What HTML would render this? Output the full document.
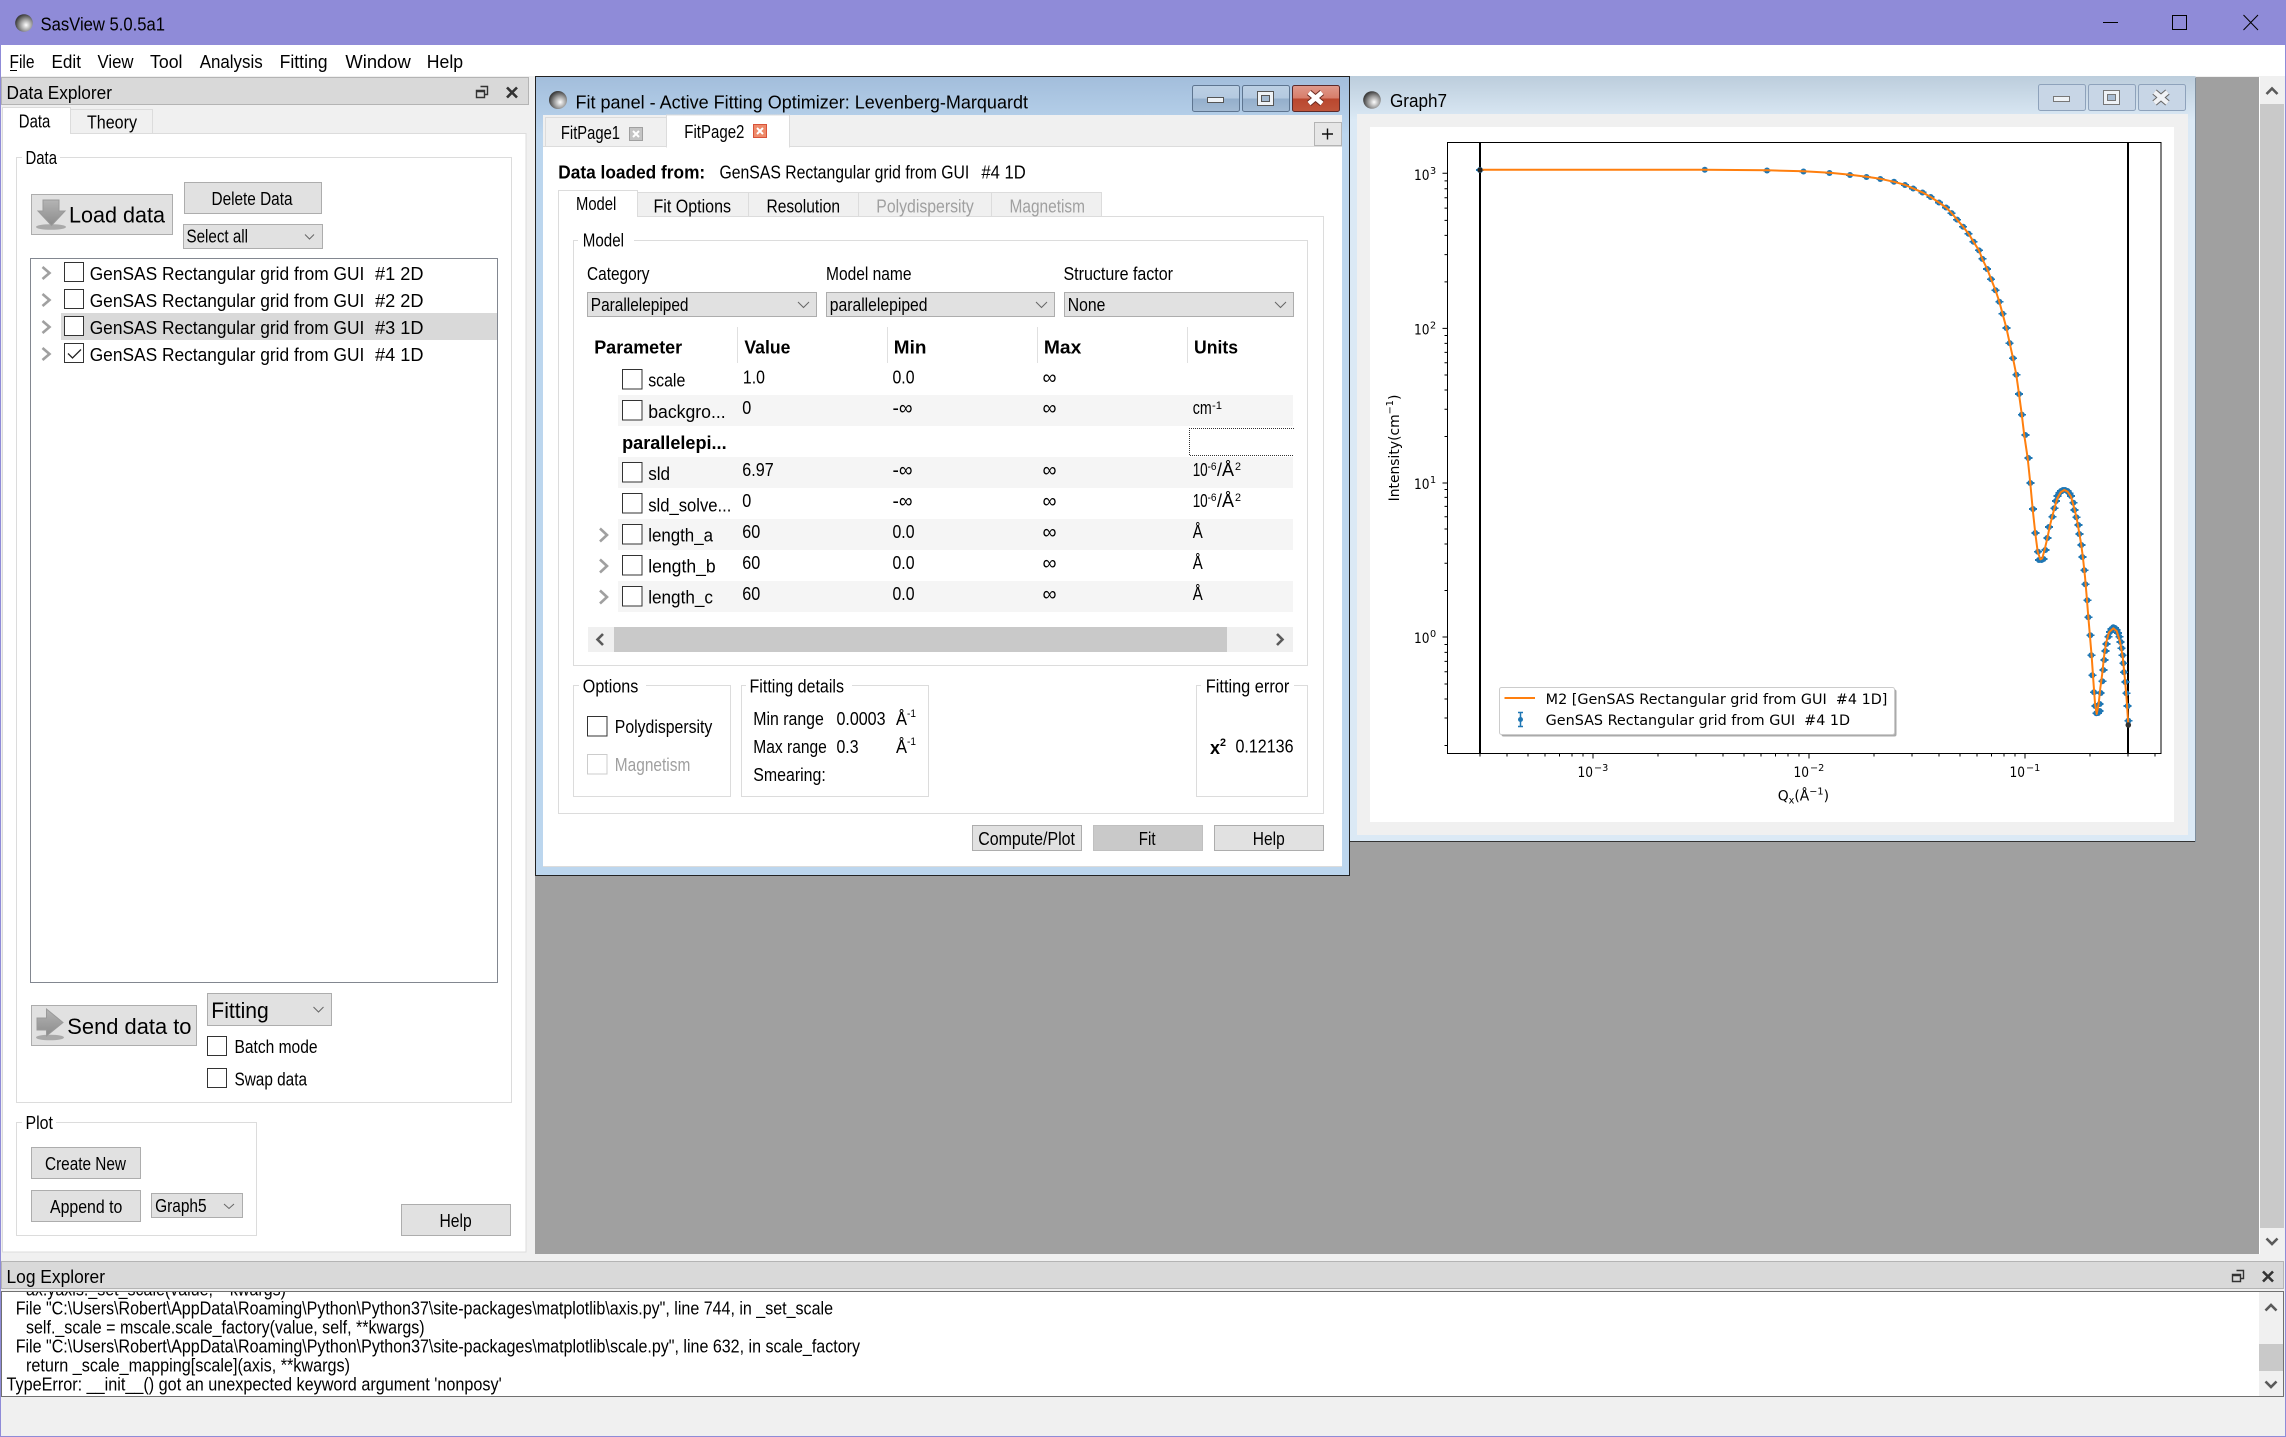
<!DOCTYPE html>
<html lang="en"><head><meta charset="utf-8"><title>SasView 5.0.5a1</title>
<style>
html,body{margin:0;padding:0;background:#f0f0f0}
svg{display:block}
text{font-family:"Liberation Sans",sans-serif;font-size:18px;fill:#000;white-space:pre}
.b{font-weight:bold}
.g{fill:#a0a0a0}
.s{font-size:11px}
.i{font-size:20px}
.d{font-family:"DejaVu Sans",sans-serif;font-size:13.9px}
.ds{font-family:"DejaVu Sans",sans-serif;font-size:9.7px}
rect{shape-rendering:crispEdges}
.r{shape-rendering:auto}
.btn{fill:#e1e1e1;stroke:#adadad}
.cb{fill:#fff;stroke:#333}
.gb{fill:none;stroke:#dcdcdc}
.cv{fill:none;stroke:#a0a0a0;stroke-width:2.6}
.dk{fill:none;stroke:#5a5a5a;stroke-width:2.6}
.cc{fill:none;stroke:#666;stroke-width:1}
</style></head><body>
<svg xmlns="http://www.w3.org/2000/svg" width="2286" height="1437" viewBox="0 0 2286 1437">
<defs>
<radialGradient id="sph" cx=".62" cy=".62" r=".62"><stop offset="0" stop-color="#fff"/><stop offset=".55" stop-color="#999"/><stop offset="1" stop-color="#3c3c3c"/></radialGradient>
<linearGradient id="fp" gradientUnits="userSpaceOnUse" x1="0" y1="76" x2="0" y2="135"><stop offset="0" stop-color="#a2bddb"/><stop offset="1" stop-color="#bcd6ee"/></linearGradient>
<linearGradient id="gp" gradientUnits="userSpaceOnUse" x1="0" y1="76" x2="0" y2="120"><stop offset="0" stop-color="#bccddc"/><stop offset="1" stop-color="#dbe9f5"/></linearGradient>
<linearGradient id="ar" x1="0" y1="0" x2="0" y2="1"><stop offset="0" stop-color="#b4b4b4"/><stop offset="1" stop-color="#8c8c8c"/></linearGradient>
<linearGradient id="ab" x1="0" y1="0" x2="0" y2="1"><stop offset="0" stop-color="#bcd0e4"/><stop offset=".5" stop-color="#b4c9e0"/><stop offset=".5" stop-color="#93aecb"/><stop offset="1" stop-color="#a3bbd4"/></linearGradient>
<linearGradient id="ac" x1="0" y1="0" x2="0" y2="1"><stop offset="0" stop-color="#e09a8c"/><stop offset=".5" stop-color="#d77c69"/><stop offset=".5" stop-color="#b9462e"/><stop offset="1" stop-color="#c0553b"/></linearGradient>
<marker id="dot" markerUnits="userSpaceOnUse" markerWidth="10" markerHeight="10" refX="5" refY="5"><circle cx="5" cy="5" r="3" fill="#1f77b4"/><rect x="1" y="4.2" width="8" height="1.6" fill="#1f77b4"/></marker>
<clipPath id="lg"><rect x="2" y="1292" width="2250" height="104"/></clipPath>
</defs>

<!-- main window -->
<rect width="2286" height="1437" fill="#f0f0f0"/>
<rect width="2286" height="45" fill="#8f8bd8"/>
<rect y="45" width="2286" height="31" fill="#fff"/>
<rect x=".5" y=".5" width="2285" height="1436" fill="none" stroke="#8f8bd8"/>
<circle cx="24" cy="23" r="8.8" fill="url(#sph)"/>
<text x="40.5" y="30.5" textLength="124.5" lengthAdjust="spacingAndGlyphs">SasView 5.0.5a1</text>
<path d="M2103 22.5h15" stroke="#000" fill="none"/><rect x="2172.5" y="15.5" width="14" height="14" fill="none" stroke="#000"/><path d="M2243.5 15l14.5 15M2258 15l-14.5 15" stroke="#000" fill="none"/>
<text x="9.500" y="68" textLength="25" lengthAdjust="spacingAndGlyphs">File</text><rect x="10" y="70" width="7" height="1" fill="#000"/>
<text x="51.500" y="68" textLength="29.500" lengthAdjust="spacingAndGlyphs">Edit</text>
<text x="97.500" y="68" textLength="36" lengthAdjust="spacingAndGlyphs">View</text>
<text x="150" y="68" textLength="32.500" lengthAdjust="spacingAndGlyphs">Tool</text>
<text x="199.700" y="68" textLength="63" lengthAdjust="spacingAndGlyphs">Analysis</text>
<text x="279.600" y="68" textLength="48" lengthAdjust="spacingAndGlyphs">Fitting</text>
<text x="345.400" y="68" textLength="65.400" lengthAdjust="spacingAndGlyphs">Window</text>
<text x="426.800" y="68" textLength="36.300" lengthAdjust="spacingAndGlyphs">Help</text>

<!-- MDI -->
<rect x="535" y="77" width="1724" height="1177" fill="#a0a0a0"/>
<rect x="2259" y="77" width="1" height="1177" fill="#fff"/>
<rect x="2260" y="104" width="24" height="1124" fill="#c9c9c9"/>
<path class="dk" d="M2266.500 94l5.500-5.500 5.500 5.500M2266.500 1238.500l5.500 5.500 5.500-5.500"/>

<!-- data explorer -->
<rect x="1.500" y="77.500" width="527" height="27" fill="#d9d9d9" stroke="#b4b4b4"/>
<text x="6.500" y="99" textLength="105.500" lengthAdjust="spacingAndGlyphs">Data Explorer</text>
<path d="M480.500 86.500h7v8h-3M476.500 90.500h8v7h-8zM476.500 91.500h8" fill="none" stroke="#333" stroke-width="1.400"/>
<path d="M507 87.500l10 10M517 87.500l-10 10" stroke="#333" stroke-width="2.600" fill="none"/>
<rect x="2.500" y="133.500" width="523.500" height="1118.500" fill="#fff" stroke="#dcdcdc"/>
<rect x="70.500" y="109.500" width="82" height="24" fill="#f0f0f0" stroke="#dcdcdc"/>
<rect x="2.500" y="107.500" width="68" height="26" fill="#fff" stroke="#dcdcdc"/><rect x="3" y="130" width="67" height="5" fill="#fff"/>
<text x="18.800" y="127.300" textLength="31.500" lengthAdjust="spacingAndGlyphs">Data</text>
<text x="87" y="128.700" textLength="50" lengthAdjust="spacingAndGlyphs">Theory</text>
<rect x="16.500" y="157.500" width="495" height="945" class="gb"/><rect x="22" y="150" width="38" height="14" fill="#fff"/>
<text x="25.500" y="164" textLength="31.500" lengthAdjust="spacingAndGlyphs">Data</text>

<rect x="31.500" y="194.500" width="141" height="40" class="btn"/>
<ellipse cx="51" cy="227" rx="15" ry="2.800" fill="#a9a9a9" class="r"/>
<path d="M43 200h16v11h6l-13.500 14.500L38 211h5z" fill="url(#ar)" stroke="#9a9a9a" class="r"/>
<text x="69" y="222.700" style="font-size:22px" textLength="96" lengthAdjust="spacingAndGlyphs">Load data</text>
<rect x="184.500" y="182.500" width="137" height="31" class="btn"/>
<text x="211.500" y="205" textLength="81" lengthAdjust="spacingAndGlyphs">Delete Data</text>
<rect x="183.500" y="224.500" width="139" height="24" class="btn"/>
<text x="186.500" y="242.700" textLength="61.500" lengthAdjust="spacingAndGlyphs">Select all</text>
<path class="cc" d="M305 234.500l4.500 4.500 4.500-4.500"/>

<rect x="30.500" y="258.500" width="467" height="724" fill="#fff" stroke="#828790"/>
<rect x="61" y="313" width="436" height="27" fill="#d9d9d9"/>
<path class="cv" d="M42.500 267l7 6-7 6M42.500 294l7 6-7 6M42.500 321l7 6-7 6M42.500 348l7 6-7 6"/>
<rect x="64.500" y="262.500" width="19" height="19" class="cb"/>
<rect x="64.500" y="289.500" width="19" height="19" class="cb"/>
<rect x="64.500" y="316.500" width="19" height="19" class="cb"/>
<rect x="64.500" y="343.500" width="19" height="19" class="cb"/>
<path d="M68 353.500l4.500 4.500L81 349.500" fill="none" stroke="#222" stroke-width="1.300"/>
<text x="89.700" y="280" textLength="274.600" lengthAdjust="spacingAndGlyphs">GenSAS Rectangular grid from GUI</text><text x="375" y="280" textLength="48.500" lengthAdjust="spacingAndGlyphs">#1 2D</text>
<text x="89.700" y="307" textLength="274.600" lengthAdjust="spacingAndGlyphs">GenSAS Rectangular grid from GUI</text><text x="375" y="307" textLength="48.500" lengthAdjust="spacingAndGlyphs">#2 2D</text>
<text x="89.700" y="334" textLength="274.600" lengthAdjust="spacingAndGlyphs">GenSAS Rectangular grid from GUI</text><text x="375" y="334" textLength="48.500" lengthAdjust="spacingAndGlyphs">#3 1D</text>
<text x="89.700" y="361" textLength="274.600" lengthAdjust="spacingAndGlyphs">GenSAS Rectangular grid from GUI</text><text x="375" y="361" textLength="48.500" lengthAdjust="spacingAndGlyphs">#4 1D</text>

<rect x="31.500" y="1005.500" width="165" height="40" class="btn"/>
<ellipse cx="50" cy="1037.500" rx="14" ry="2.800" fill="#a9a9a9" class="r"/>
<path d="M37 1018h9.500v-9L63 1022.500 46.500 1036v-6H37z" fill="url(#ar)" stroke="#9a9a9a" class="r"/>
<text x="67.300" y="1034" style="font-size:22px" textLength="124.200" lengthAdjust="spacingAndGlyphs">Send data to</text>
<rect x="207.500" y="993.500" width="124" height="32" class="btn"/>
<text x="211.300" y="1018" style="font-size:22px" textLength="57.500" lengthAdjust="spacingAndGlyphs">Fitting</text>
<path class="cc" d="M313.500 1007l5 5 5-5"/>
<rect x="207.500" y="1036.500" width="19" height="19" class="cb"/>
<text x="234.500" y="1053" textLength="83" lengthAdjust="spacingAndGlyphs">Batch mode</text>
<rect x="207.500" y="1068.500" width="19" height="19" class="cb"/>
<text x="234.500" y="1085.300" textLength="72.500" lengthAdjust="spacingAndGlyphs">Swap data</text>

<rect x="16.500" y="1122.500" width="240" height="113" class="gb"/><rect x="22" y="1116" width="34" height="14" fill="#fff"/>
<text x="25.500" y="1129" textLength="27.500" lengthAdjust="spacingAndGlyphs">Plot</text>
<rect x="31.500" y="1147.500" width="109" height="31" class="btn"/>
<text x="45" y="1170" textLength="81" lengthAdjust="spacingAndGlyphs">Create New</text>
<rect x="31.500" y="1190.500" width="109" height="31" class="btn"/>
<text x="50" y="1213" textLength="72.300" lengthAdjust="spacingAndGlyphs">Append to</text>
<rect x="151.500" y="1193.500" width="91" height="24" class="btn"/>
<text x="155.100" y="1212" textLength="51.500" lengthAdjust="spacingAndGlyphs">Graph5</text>
<path class="cc" d="M224 1204l5 4.500 5-4.500"/>
<rect x="401.500" y="1204.500" width="109" height="31" class="btn"/>
<text x="439.500" y="1227" textLength="32.200" lengthAdjust="spacingAndGlyphs">Help</text>

<!-- log explorer -->
<rect x="1.500" y="1261.500" width="2282" height="27" fill="#d9d9d9" stroke="#b4b4b4"/>
<text x="6.500" y="1283" textLength="98.500" lengthAdjust="spacingAndGlyphs">Log Explorer</text>
<path d="M2236.500 1270.500h7v8h-3M2232.500 1274.500h8v7h-8zM2232.500 1275.500h8" fill="none" stroke="#333" stroke-width="1.400"/>
<path d="M2263 1271.500l10 10M2273 1271.500l-10 10" stroke="#333" stroke-width="2.600" fill="none"/>
<rect x="1.500" y="1291.500" width="2282" height="105" fill="#fff" stroke="#707070"/>
<g clip-path="url(#lg)">
<text x="26" y="1295.300" textLength="260" lengthAdjust="spacingAndGlyphs">ax.yaxis._set_scale(value, **kwargs)</text>
<text x="15.700" y="1314.300" textLength="817.300" lengthAdjust="spacingAndGlyphs">File "C:\Users\Robert\AppData\Roaming\Python\Python37\site-packages\matplotlib\axis.py", line 744, in _set_scale</text>
<text x="26" y="1333.300" textLength="398.600" lengthAdjust="spacingAndGlyphs">self._scale = mscale.scale_factory(value, self, **kwargs)</text>
<text x="15.700" y="1352.300" textLength="844.300" lengthAdjust="spacingAndGlyphs">File "C:\Users\Robert\AppData\Roaming\Python\Python37\site-packages\matplotlib\scale.py", line 632, in scale_factory</text>
<text x="26" y="1371.300" textLength="324" lengthAdjust="spacingAndGlyphs">return _scale_mapping[scale](axis, **kwargs)</text>
<text x="6.500" y="1390.300" textLength="495.200" lengthAdjust="spacingAndGlyphs">TypeError: __init__() got an unexpected keyword argument 'nonposy'</text>
</g>
<rect x="2259" y="1292" width="24" height="104" fill="#f0f0f0"/>
<rect x="2259" y="1344" width="24" height="27" fill="#c9c9c9"/>
<path class="dk" d="M2265.500 1310.500l5.500-5.500 5.500 5.500M2265.500 1381.500l5.500 5.500 5.500-5.500"/>

<!-- graph window -->
<rect x="1350" y="76" width="845.500" height="766" fill="url(#gp)"/>
<path d="M1350 841.500h845.500" stroke="#333" fill="none"/>
<path d="M2195.500 78v764" stroke="#7f8f9e" fill="none"/>
<rect x="1357" y="114" width="831" height="721" fill="#f0f0f0"/>
<rect x="1370" y="127" width="804" height="695" fill="#fff"/>
<circle cx="1372" cy="100" r="8.800" fill="url(#sph)"/>
<text x="1390" y="106.800" textLength="57" lengthAdjust="spacingAndGlyphs">Graph7</text>
<rect x="2038.500" y="84.500" width="47" height="26" rx="2" fill="#c8d6e6" stroke="#8ea2bb" class="r"/>
<rect x="2088.500" y="84.500" width="47" height="26" rx="2" fill="#c8d6e6" stroke="#8ea2bb" class="r"/>
<rect x="2138.500" y="84.500" width="47" height="26" rx="2" fill="#c8d6e6" stroke="#8ea2bb" class="r"/>
<rect x="2053.500" y="96.500" width="16" height="5" fill="#eef2f6" stroke="#777" class="r"/>
<rect x="2103.500" y="90.500" width="16" height="14" fill="#eef2f6" stroke="#777" class="r"/><rect x="2107.500" y="94.500" width="8" height="6" fill="#a9bdd3" stroke="#777" class="r"/>
<path d="M2154.500 92l13 11M2167.500 92l-13 11" stroke="#666" stroke-width="6.500" fill="none"/><path d="M2154.500 92l13 11M2167.500 92l-13 11" stroke="#f0f2f5" stroke-width="4.500" fill="none"/>

<!-- plot -->
<rect x="1447.500" y="142.500" width="713.500" height="611" fill="#fff" stroke="#000"/>
<path d="M1480 143v610M2128 143v610" stroke="#000" stroke-width="2" fill="none"/>
<path d="M1447.500 173.300h-5M1447.500 328.400h-5M1447.500 483h-5M1447.500 637h-5M1593 753.500v5M1809 753.500v5M2025 753.500v5" stroke="#000" fill="none"/>
<path d="M1447.500 180.900h-3M1447.500 188.800h-3M1447.500 197.800h-3M1447.500 208.100h-3M1447.500 220.400h-3M1447.500 235.400h-3M1447.500 254.600h-3M1447.500 281.900h-3M1447.500 335.500h-3M1447.500 343.400h-3M1447.500 352.400h-3M1447.500 362.700h-3M1447.500 375h-3M1447.500 390h-3M1447.500 409.200h-3M1447.500 436.500h-3M1447.500 489.500h-3M1447.500 497.400h-3M1447.500 506.400h-3M1447.500 516.700h-3M1447.500 529h-3M1447.500 544h-3M1447.500 563.200h-3M1447.500 590.500h-3M1447.500 644.500h-3M1447.500 652.400h-3M1447.500 661.400h-3M1447.500 671.700h-3M1447.500 684h-3M1447.500 699h-3M1447.500 718h-3M1447.500 745.500h-3M1480 753.500v3M1507 753.500v3M1528 753.500v3M1545 753.500v3M1559.500 753.500v3M1572 753.500v3M1583 753.500v3M1658 753.500v3M1696 753.500v3M1723 753.500v3M1744 753.500v3M1761 753.500v3M1775.500 753.500v3M1788 753.500v3M1799 753.500v3M1874 753.500v3M1912 753.500v3M1939 753.500v3M1960 753.500v3M1977 753.500v3M1991.500 753.500v3M2004 753.500v3M2015 753.500v3M2090 753.500v3M2128 753.500v3M2155 753.500v3" stroke="#000" fill="none"/>

<polyline fill="none" stroke="none" marker-start="url(#dot)" marker-mid="url(#dot)" marker-end="url(#dot)" points="1480,170 1704.8,169.800 1767,170.500 1803.500,171.500 1829.500,173 1850,175 1866.500,177 1880.300,179 1894,181.800 1905,185 1913.200,188.500 1922.500,192.500 1930.700,197 1939,202.500 1946.100,207.500 1951.600,213.100 1957.100,219.600 1963.100,226.700 1968.600,233.700 1973.500,241.800 1979,250.400 1982.300,258.900 1987.200,269 1991.100,279.100 1995.500,290.200 1999.300,301.700 2002.600,313.800 2006.400,328 2009.700,343.100 2013,358.200 2016.300,374.800 2019,394 2021.800,414.600 2025.300,435 2028.300,458 2030.300,483 2033,509 2035.300,533 2038,551.700 2039,560 2041.500,560 2043.500,559 2045.300,550 2047.300,538 2049,527 2052.300,516.700 2054.300,508.300 2056,501 2057.500,496 2059.300,493 2061,491 2063,490 2065,490 2067.500,491 2069.300,493.300 2071,496 2073.300,502.700 2074.300,510 2076.300,517.300 2078.300,525 2079.300,534 2081.300,545 2082.300,557 2084.300,570.300 2085.300,584.300 2087.300,600.300 2088.300,617.300 2090.300,635.300 2091.300,655.300 2092.300,675.300 2094,692.300 2095.300,706 2096.300,713.300 2098,713 2099.700,711 2099.700,704 2100.700,693 2102.300,681.300 2103.300,670 2104.300,660 2105.300,651 2106.300,644 2108.300,636.700 2110,632 2111.500,629 2113.300,627.300 2115,628 2116.700,630 2118,633 2119.300,636.700 2120.700,642 2121.700,648.300 2122.700,655.300 2123.300,663.300 2124,672.300 2125.300,682 2126.300,693.300 2127.700,706 2128.300,720.700"/>
<polyline fill="none" stroke="#ff7f0e" stroke-width="2" stroke-linejoin="round" points="1480,169.800 1704.800,169.800 1767.800,170.300 1803.500,171.300 1829.800,172.800 1850.100,174.800 1866.600,176.800 1880.300,178.800 1894,181.800 1905,184.900 1913.200,188.400 1922.500,192.400 1930.700,197 1939,202.500 1946.100,207.500 1951.600,213.100 1957.100,219.600 1963.100,226.700 1968.600,233.700 1973.500,241.800 1979,250.400 1982.300,258.900 1987.200,269 1991.100,279.100 1995.500,290.200 1999.300,301.700 2002.600,313.800 2006.400,328 2009.700,343.100 2013,358.200 2016.300,374.800 2019,394 2021.800,414.600 2024,433.300 2027.700,458.300 2030.300,483.300 2032.700,509.300 2035.300,533.300 2037.700,551.700 2040.300,559.300 2042.300,558.300 2044.700,549.300 2047.300,538.300 2049.700,526.700 2052.300,516 2054.700,507.300 2057.300,498.300 2060.700,492.300 2064.300,490 2067.700,491.700 2071,496.700 2074.300,508.300 2077,520 2079.300,533.300 2081.300,545 2083,558.300 2085,576.700 2086.700,596.700 2088.300,616.700 2090,636.700 2091.700,656.700 2093.300,680 2095,703.300 2096.700,714 2098.700,703.300 2100.300,688.300 2102.300,673.300 2104,656.700 2106,643.300 2109,632.300 2113.300,628.300 2116.700,631 2120,641.700 2122.700,656.700 2125,680 2126.700,700 2128.300,725"/>
<circle cx="1480" cy="170" r="2.600" fill="#222"/><circle cx="2128.300" cy="725" r="2.800" fill="#333"/>

<rect x="1501.500" y="689.500" width="395" height="47" rx="2" fill="#aaa" class="r"/>
<rect x="1499.500" y="687.500" width="395" height="47" rx="2" fill="#fff" stroke="#ccc" class="r"/>
<path d="M1504.500 698h30.500" stroke="#ff7f0e" stroke-width="2" fill="none"/>
<path d="M1520.500 712v15M1518 712.500h5M1518 726.500h5" stroke="#1f77b4" stroke-width="1.500" fill="none"/><circle cx="1520.500" cy="719.500" r="2.500" fill="#1f77b4"/>
<text class="d" x="1545.700" y="703.800" textLength="341.700" lengthAdjust="spacingAndGlyphs">M2 [GenSAS Rectangular grid from GUI  #4 1D]</text>
<text class="d" x="1545.700" y="725" textLength="304.400" lengthAdjust="spacingAndGlyphs">GenSAS Rectangular grid from GUI  #4 1D</text>

<text class="d" x="1414" y="179.800" textLength="15.500" lengthAdjust="spacingAndGlyphs">10</text><text class="ds" x="1430" y="174">3</text>
<text class="d" x="1414" y="334.500" textLength="15.500" lengthAdjust="spacingAndGlyphs">10</text><text class="ds" x="1430" y="328.700">2</text>
<text class="d" x="1414" y="489" textLength="15.500" lengthAdjust="spacingAndGlyphs">10</text><text class="ds" x="1430" y="483.200">1</text>
<text class="d" x="1414" y="643" textLength="15.500" lengthAdjust="spacingAndGlyphs">10</text><text class="ds" x="1430" y="637.200">0</text>
<text class="d" x="1577.500" y="776.800" textLength="15.500" lengthAdjust="spacingAndGlyphs">10</text><text class="ds" x="1594" y="771">−3</text>
<text class="d" x="1793.500" y="776.800" textLength="15.500" lengthAdjust="spacingAndGlyphs">10</text><text class="ds" x="1810" y="771">−2</text>
<text class="d" x="2009.500" y="776.800" textLength="15.500" lengthAdjust="spacingAndGlyphs">10</text><text class="ds" x="2026" y="771">−1</text>
<text class="d" x="1777.700" y="800.500">Q<tspan class="ds" dy="3">x</tspan><tspan dy="-3">(Å</tspan><tspan class="ds" dy="-6">−1</tspan><tspan dy="6">)</tspan></text>
<text class="d" transform="rotate(-90 1399 448)" x="1399" y="448" text-anchor="middle">Intensity(cm<tspan class="ds" dy="-6">−1</tspan><tspan dy="6">)</tspan></text>

<!-- fit panel window -->
<rect x="535.500" y="76.500" width="814" height="799" fill="url(#fp)" stroke="#222"/>
<rect x="543" y="115" width="799" height="752" fill="#fff"/>
<path d="M543 866.500h799" stroke="#dcdcdc" fill="none"/>
<rect x="543" y="115" width="799" height="31" fill="#f0f0f0"/>
<path d="M543 146.500h799" stroke="#dcdcdc" fill="none"/>
<circle cx="558" cy="100" r="9" fill="url(#sph)"/>
<text x="575.500" y="108.300" textLength="452.500" lengthAdjust="spacingAndGlyphs">Fit panel - Active Fitting Optimizer: Levenberg-Marquardt</text>
<rect x="1192.500" y="85.500" width="47" height="26" rx="2" fill="url(#ab)" stroke="#5e7590" class="r"/>
<rect x="1242.500" y="85.500" width="47" height="26" rx="2" fill="url(#ab)" stroke="#5e7590" class="r"/>
<rect x="1292.500" y="85.500" width="47" height="26" rx="2" fill="url(#ac)" stroke="#5c2a2a" class="r"/>
<rect x="1207.500" y="97.500" width="16" height="5" fill="#eef2f6" stroke="#555" class="r"/>
<rect x="1257.500" y="91.500" width="16" height="14" fill="#eef2f6" stroke="#555" class="r"/><rect x="1261.500" y="95.500" width="8" height="6" fill="#a3b9d0" stroke="#555" class="r"/>
<path d="M1309 92.500l13 11M1322 92.500l-13 11" stroke="#6b2a20" stroke-width="6.500" fill="none"/><path d="M1309 92.500l13 11M1322 92.500l-13 11" stroke="#fff" stroke-width="4.500" fill="none"/>

<rect x="545.500" y="117.500" width="121" height="29" fill="#f0f0f0" stroke="#dcdcdc"/>
<rect x="666.500" y="115" width="123" height="32" fill="#fff" stroke="#dcdcdc"/><rect x="667" y="144" width="122" height="4" fill="#fff"/>
<text x="560.900" y="139" textLength="59.100" lengthAdjust="spacingAndGlyphs">FitPage1</text>
<rect x="629.500" y="127.500" width="13" height="13" fill="#c4c4c4" stroke="#a0a0a0"/><path d="M633 131l6 6M639 131l-6 6" stroke="#fff" stroke-width="2" fill="none"/>
<text x="684.300" y="138" textLength="60.100" lengthAdjust="spacingAndGlyphs">FitPage2</text>
<rect x="753.500" y="124.500" width="13" height="13" fill="#ee8a6a" stroke="#d8533a"/><path d="M757 128l6 6M763 128l-6 6" stroke="#fff" stroke-width="2" fill="none"/>
<rect x="1314.500" y="122.500" width="27" height="23" fill="#e6e6e6" stroke="#b4b4b4"/>
<path d="M1322 134h11M1327.500 128.500v11" stroke="#111" stroke-width="1.400" fill="none"/>

<text class="b" x="558.300" y="178.300" textLength="146.900" lengthAdjust="spacingAndGlyphs">Data loaded from:</text>
<text x="719.500" y="178.300" textLength="249.800" lengthAdjust="spacingAndGlyphs">GenSAS Rectangular grid from GUI</text><text x="981.400" y="178.300" textLength="44.400" lengthAdjust="spacingAndGlyphs">#4 1D</text>

<rect x="558.500" y="216.500" width="765" height="597" fill="#fff" stroke="#dcdcdc"/>
<rect x="637.500" y="192.500" width="111" height="24" fill="#f0f0f0" stroke="#dcdcdc"/>
<rect x="748.500" y="192.500" width="110" height="24" fill="#f0f0f0" stroke="#dcdcdc"/>
<rect x="858.500" y="192.500" width="133" height="24" fill="#f0f0f0" stroke="#dcdcdc"/>
<rect x="991.500" y="192.500" width="110" height="24" fill="#f0f0f0" stroke="#dcdcdc"/>
<rect x="558.500" y="190.500" width="79" height="26" fill="#fff" stroke="#dcdcdc"/><rect x="559" y="214" width="78" height="4" fill="#fff"/>
<text x="576" y="210" textLength="40.300" lengthAdjust="spacingAndGlyphs">Model</text>
<text x="653.500" y="212.300" textLength="77.500" lengthAdjust="spacingAndGlyphs">Fit Options</text>
<text x="766.500" y="212.300" textLength="73.500" lengthAdjust="spacingAndGlyphs">Resolution</text>
<text class="g" x="876.300" y="212.300" textLength="97.500" lengthAdjust="spacingAndGlyphs">Polydispersity</text>
<text class="g" x="1009.500" y="212.300" textLength="75.500" lengthAdjust="spacingAndGlyphs">Magnetism</text>

<rect x="573.500" y="240.500" width="734" height="425" class="gb"/><rect x="578" y="233" width="56" height="14" fill="#fff"/>
<text x="582.800" y="246.700" textLength="41.200" lengthAdjust="spacingAndGlyphs">Model</text>
<text x="587" y="280" textLength="62.500" lengthAdjust="spacingAndGlyphs">Category</text>
<text x="826" y="280" textLength="85.500" lengthAdjust="spacingAndGlyphs">Model name</text>
<text x="1063.500" y="280" textLength="109.500" lengthAdjust="spacingAndGlyphs">Structure factor</text>
<rect x="587.500" y="292.500" width="229" height="24" class="btn"/>
<rect x="826.500" y="292.500" width="228" height="24" class="btn"/>
<rect x="1064.500" y="292.500" width="229" height="24" class="btn"/>
<text x="590.800" y="311" textLength="97.700" lengthAdjust="spacingAndGlyphs">Parallelepiped</text>
<text x="829.800" y="311" textLength="97.700" lengthAdjust="spacingAndGlyphs">parallelepiped</text>
<text x="1067.800" y="311" textLength="37.500" lengthAdjust="spacingAndGlyphs">None</text>
<path class="cc" d="M798 302l5.500 5.500 5.500-5.500M1036 302l5.500 5.500 5.500-5.500M1275 302l5.500 5.500 5.500-5.500"/>

<path d="M737.500 327v36M887.500 327v36M1037.500 327v36M1187.500 327v36" stroke="#e0e0e0" fill="none"/>
<text class="b" x="594.200" y="353.300" textLength="88" lengthAdjust="spacingAndGlyphs">Parameter</text>
<text class="b" x="744.400" y="353.300" textLength="46" lengthAdjust="spacingAndGlyphs">Value</text>
<text class="b" x="893.800" y="353.300" textLength="32.600" lengthAdjust="spacingAndGlyphs">Min</text>
<text class="b" x="1043.900" y="353.300" textLength="37.400" lengthAdjust="spacingAndGlyphs">Max</text>
<text class="b" x="1194" y="353.300" textLength="44" lengthAdjust="spacingAndGlyphs">Units</text>

<rect x="618" y="395" width="675" height="31" fill="#f5f5f5"/>
<rect x="618" y="457" width="675" height="31" fill="#f5f5f5"/>
<rect x="618" y="519" width="675" height="31" fill="#f5f5f5"/>
<rect x="618" y="581" width="675" height="31" fill="#f5f5f5"/>
<rect x="622.500" y="369.500" width="19.500" height="19.500" class="cb"/>
<rect x="622.500" y="400.500" width="19.500" height="19.500" class="cb"/>
<rect x="622.500" y="462.500" width="19.500" height="19.500" class="cb"/>
<rect x="622.500" y="493.500" width="19.500" height="19.500" class="cb"/>
<rect x="622.500" y="524.500" width="19.500" height="19.500" class="cb"/>
<rect x="622.500" y="555.500" width="19.500" height="19.500" class="cb"/>
<rect x="622.500" y="586.500" width="19.500" height="19.500" class="cb"/>
<path class="cv" d="M600 528.500l7 6.500-7 6.500M600 559.500l7 6.500-7 6.500M600 590.500l7 6.500-7 6.500"/>

<text x="648.200" y="386.700" textLength="37.100" lengthAdjust="spacingAndGlyphs">scale</text>
<text x="742.900" y="383.300" textLength="22" lengthAdjust="spacingAndGlyphs">1.0</text>
<text x="892.500" y="383.300" textLength="22" lengthAdjust="spacingAndGlyphs">0.0</text>
<text class="i" x="1042.500" y="383.800" textLength="14" lengthAdjust="spacingAndGlyphs">∞</text>

<text x="648.200" y="418" textLength="77.500" lengthAdjust="spacingAndGlyphs">backgro...</text>
<text x="742.300" y="414" textLength="9" lengthAdjust="spacingAndGlyphs">0</text>
<text class="i" x="892.500" y="414.500" textLength="20" lengthAdjust="spacingAndGlyphs">-∞</text>
<text class="i" x="1042.500" y="414.500" textLength="14" lengthAdjust="spacingAndGlyphs">∞</text>
<text x="1192.700" y="414" textLength="19" lengthAdjust="spacingAndGlyphs">cm</text><text class="s" x="1212" y="409" textLength="10" lengthAdjust="spacingAndGlyphs">-1</text>

<text class="b" x="622.100" y="449" textLength="104.500" lengthAdjust="spacingAndGlyphs">parallelepi...</text>
<path d="M1294 428.500h-104.500v27H1294" fill="none" stroke="#333" stroke-dasharray="1 1"/>

<text x="648.200" y="480" textLength="21.900" lengthAdjust="spacingAndGlyphs">sld</text>
<text x="742.300" y="476" textLength="31.400" lengthAdjust="spacingAndGlyphs">6.97</text>
<text class="i" x="892.500" y="476.500" textLength="20" lengthAdjust="spacingAndGlyphs">-∞</text>
<text class="i" x="1042.500" y="476.500" textLength="14" lengthAdjust="spacingAndGlyphs">∞</text>
<text x="1192.700" y="476" textLength="15" lengthAdjust="spacingAndGlyphs">10</text><text class="s" x="1207.500" y="470" textLength="9" lengthAdjust="spacingAndGlyphs">-6</text><text x="1217" y="476" textLength="17" lengthAdjust="spacingAndGlyphs">/Å</text><text class="s" x="1235" y="470" textLength="6" lengthAdjust="spacingAndGlyphs">2</text>

<text x="648.200" y="511.300" textLength="83.200" lengthAdjust="spacingAndGlyphs">sld_solve...</text>
<text x="742.300" y="507" textLength="9" lengthAdjust="spacingAndGlyphs">0</text>
<text class="i" x="892.500" y="507.500" textLength="20" lengthAdjust="spacingAndGlyphs">-∞</text>
<text class="i" x="1042.500" y="507.500" textLength="14" lengthAdjust="spacingAndGlyphs">∞</text>
<text x="1192.700" y="507" textLength="15" lengthAdjust="spacingAndGlyphs">10</text><text class="s" x="1207.500" y="501" textLength="9" lengthAdjust="spacingAndGlyphs">-6</text><text x="1217" y="507" textLength="17" lengthAdjust="spacingAndGlyphs">/Å</text><text class="s" x="1235" y="501" textLength="6" lengthAdjust="spacingAndGlyphs">2</text>

<text x="648.200" y="541.700" textLength="64.800" lengthAdjust="spacingAndGlyphs">length_a</text>
<text x="742.300" y="538" textLength="18" lengthAdjust="spacingAndGlyphs">60</text>
<text x="892.500" y="538" textLength="22" lengthAdjust="spacingAndGlyphs">0.0</text>
<text class="i" x="1042.500" y="538.500" textLength="14" lengthAdjust="spacingAndGlyphs">∞</text>
<text x="1192.700" y="538" textLength="10" lengthAdjust="spacingAndGlyphs">Å</text>

<text x="648.200" y="572.700" textLength="67.500" lengthAdjust="spacingAndGlyphs">length_b</text>
<text x="742.300" y="569" textLength="18" lengthAdjust="spacingAndGlyphs">60</text>
<text x="892.500" y="569" textLength="22" lengthAdjust="spacingAndGlyphs">0.0</text>
<text class="i" x="1042.500" y="569.500" textLength="14" lengthAdjust="spacingAndGlyphs">∞</text>
<text x="1192.700" y="569" textLength="10" lengthAdjust="spacingAndGlyphs">Å</text>

<text x="648.200" y="603.700" textLength="64.800" lengthAdjust="spacingAndGlyphs">length_c</text>
<text x="742.300" y="600" textLength="18" lengthAdjust="spacingAndGlyphs">60</text>
<text x="892.500" y="600" textLength="22" lengthAdjust="spacingAndGlyphs">0.0</text>
<text class="i" x="1042.500" y="600.500" textLength="14" lengthAdjust="spacingAndGlyphs">∞</text>
<text x="1192.700" y="600" textLength="10" lengthAdjust="spacingAndGlyphs">Å</text>

<rect x="588" y="627" width="705" height="25" fill="#f0f0f0"/>
<rect x="614" y="627" width="613" height="25" fill="#c9c9c9"/>
<path class="dk" d="M603 634l-5.500 5.500 5.500 5.500M1277 634l5.500 5.500-5.500 5.500"/>

<rect x="573.500" y="685.500" width="157" height="111" class="gb"/><rect x="579" y="679" width="67" height="14" fill="#fff"/>
<text x="582.800" y="692.300" textLength="55.500" lengthAdjust="spacingAndGlyphs">Options</text>
<rect x="587.500" y="716.500" width="19.500" height="19.500" class="cb"/>
<text x="614.800" y="733" textLength="97.500" lengthAdjust="spacingAndGlyphs">Polydispersity</text>
<rect x="587.500" y="754.500" width="19.500" height="19.500" fill="#fff" stroke="#ccc"/>
<text class="g" x="614.800" y="771" textLength="75.500" lengthAdjust="spacingAndGlyphs">Magnetism</text>

<rect x="741.500" y="685.500" width="187" height="111" class="gb"/><rect x="746" y="679" width="106" height="14" fill="#fff"/>
<text x="749.500" y="692.300" textLength="94.500" lengthAdjust="spacingAndGlyphs">Fitting details</text>
<text x="753.300" y="725" textLength="70.500" lengthAdjust="spacingAndGlyphs">Min range</text>
<text x="836.500" y="725" textLength="49" lengthAdjust="spacingAndGlyphs">0.0003</text>
<text x="896" y="725" textLength="11" lengthAdjust="spacingAndGlyphs">Å</text><text class="s" x="907" y="717" textLength="9" lengthAdjust="spacingAndGlyphs">-1</text>
<text x="753.300" y="753" textLength="73.500" lengthAdjust="spacingAndGlyphs">Max range</text>
<text x="836.500" y="753" textLength="22" lengthAdjust="spacingAndGlyphs">0.3</text>
<text x="896" y="753" textLength="11" lengthAdjust="spacingAndGlyphs">Å</text><text class="s" x="907" y="745" textLength="9" lengthAdjust="spacingAndGlyphs">-1</text>
<text x="753.300" y="781" textLength="72.500" lengthAdjust="spacingAndGlyphs">Smearing:</text>

<rect x="1196.500" y="685.500" width="111" height="111" class="gb"/><rect x="1201" y="679" width="93" height="14" fill="#fff"/>
<text x="1205.800" y="692.300" textLength="83.500" lengthAdjust="spacingAndGlyphs">Fitting error</text>
<text class="b" x="1210" y="754" textLength="10" lengthAdjust="spacingAndGlyphs">x</text><text class="b s" x="1220" y="746" textLength="6" lengthAdjust="spacingAndGlyphs">2</text>
<text x="1235.500" y="752.700" textLength="58" lengthAdjust="spacingAndGlyphs">0.12136</text>

<rect x="972.500" y="825.500" width="109" height="25" class="btn"/>
<text x="978.200" y="845" textLength="96.800" lengthAdjust="spacingAndGlyphs">Compute/Plot</text>
<rect x="1093.500" y="825.500" width="109" height="25" fill="#c9c9c9" stroke="#c0c0c0"/>
<text x="1138.800" y="845" textLength="16.700" lengthAdjust="spacingAndGlyphs">Fit</text>
<rect x="1214.500" y="825.500" width="109" height="25" class="btn"/>
<text x="1252.800" y="845" textLength="31.900" lengthAdjust="spacingAndGlyphs">Help</text>
</svg>
</body></html>
